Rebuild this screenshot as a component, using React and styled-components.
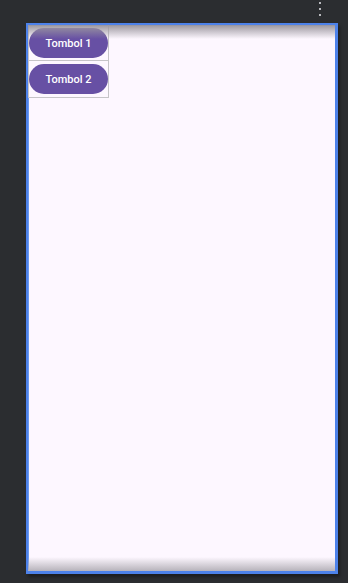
import React from "react";
import styled, { createGlobalStyle } from "styled-components";

const Global = createGlobalStyle`
  html, body { margin: 0; padding: 0; background: #2b2d30; }
  body { font-family: Roboto, "Noto Sans", sans-serif; }
`;

const Page = styled.div`
  width: 348px;
  height: 583px;
  background: #2b2d30;
  display: flex;
  flex-direction: column;
  overflow: hidden;
`;

const TopBar = styled.div`
  height: 23px;
  display: flex;
  justify-content: flex-end;
  padding-right: 27px;
  box-sizing: border-box;
`;

const Kebab = styled.div`
  display: flex;
  flex-direction: column;
  gap: 4px;
  padding-top: 2px;
`;

const Dot = styled.span`
  width: 2px;
  height: 2px;
  background: #b8b9bd;
`;

const Frame = styled.div`
  margin-left: 26px;
  width: 312px;
  height: 551px;
  box-sizing: border-box;
  border: 2px solid #4d82ea;
  border-right-width: 3px;
  border-bottom-width: 3px;
  box-shadow: inset 1px 1px 0 #6d9af0, 2px 3px 3px rgba(0, 0, 0, 0.35);
  background: #fdf7ff;
  position: relative;
  &::before {
    content: "";
    position: absolute;
    left: 0; right: 0; top: 0;
    height: 14px;
    background: linear-gradient(#9b979f, rgba(253, 247, 255, 0));
    pointer-events: none;
    z-index: 2;
  }
  &::after {
    content: "";
    position: absolute;
    left: 0; right: 0; bottom: 0;
    height: 14px;
    background: linear-gradient(rgba(253, 247, 255, 0), #b7b3bb);
    pointer-events: none;
    z-index: 2;
  }
`;

const Group = styled.div`
  display: inline-flex;
  flex-direction: column;
  border: 1px solid #c6c4c8;
  border-top: none;
`;

const Cell = styled.div`
  display: flex;
  padding: 3px 0 2px 0;
  border-bottom: 1px solid #c6c4c8;
  &:last-child { border-bottom: none; padding-bottom: 3px; }
`;

const Button = styled.button`
  width: 79px;
  height: 30px;
  border: none;
  border-radius: 15px;
  background: #6750a4;
  color: #ffffff;
  font-family: Roboto, "Noto Sans", sans-serif;
  font-weight: 500;
  font-size: 11px;
  padding: 0;
  cursor: pointer;
`;

export default function App() {
  return (
    <>
      <Global />
      <Page>
        <TopBar>
          <Kebab>
            <Dot />
            <Dot />
            <Dot />
          </Kebab>
        </TopBar>
        <Frame>
          <Group>
            <Cell>
              <Button>Tombol 1</Button>
            </Cell>
            <Cell>
              <Button>Tombol 2</Button>
            </Cell>
          </Group>
        </Frame>
      </Page>
    </>
  );
}
